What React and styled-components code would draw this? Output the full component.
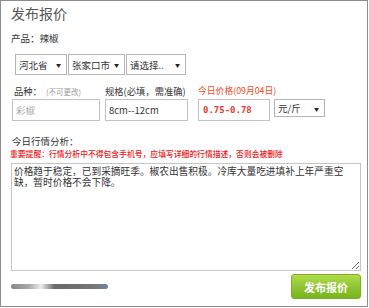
import React from "react";
import styled, { createGlobalStyle } from "styled-components";

const Global = createGlobalStyle`
  body {
    margin: 0;
    background: #fff;
    font-family: "Noto Sans CJK SC", "Liberation Sans", sans-serif;
  }
`;

const Frame = styled.div`
  width: 368px;
  height: 307px;
  box-sizing: border-box;
  border: 1px solid #8c8c8c;
  padding: 0 6px 0 9px;
  display: flex;
  flex-direction: column;
  color: #333;
`;

const Title = styled.h1`
  margin: 0;
  height: 24px;
  line-height: 24px;
  font-size: 14px;
  font-weight: normal;
  color: #555;
  padding-left: 1px;
`;

const Product = styled.div`
  margin-top: 6px;
  line-height: 14px;
  font-size: 9.5px;
  padding-left: 1px;
`;

const SelectRow = styled.div`
  margin-top: 9px;
  padding-left: 5px;
  display: flex;
  gap: 1px;
`;

const Select = styled.div`
  box-sizing: border-box;
  width: ${(p) => p.w}px;
  height: ${(p) => p.h || 21}px;
  border: 1px solid #b4b4b4;
  background: #fff;
  display: flex;
  align-items: center;
  padding: 0 5px 0 3px;
  font-size: 9.5px;
  color: #333;
  overflow: hidden;
`;

const SelectText = styled.span`
  flex: 1;
  white-space: nowrap;
  overflow: hidden;
`;

const Arrow = styled.span`
  font-size: 5px;
  color: #222;
  margin-left: 2px;
`;

const FieldRow = styled.div`
  margin-top: 9px;
  margin-left: 2px;
  display: flex;
`;

const Field = styled.div`
  width: ${(p) => p.w}px;
  margin-right: ${(p) => p.gap || 0}px;
  display: flex;
  flex-direction: column;
`;

const Label = styled.div`
  height: 14px;
  line-height: 14px;
  font-size: ${(p) => (p.red ? 8.8 : 9.3)}px;
  white-space: nowrap;
  padding-left: ${(p) => p.pad || 0}px;
  color: ${(p) => (p.red ? "#ea4a2a" : "#333")};
  margin-bottom: 1px;
`;

const Hint = styled.span`
  font-size: 7.5px;
  color: #999;
  margin-left: 4px;
`;

const Input = styled.div`
  box-sizing: border-box;
  height: 22px;
  border: 1px solid #c2c2c2;
  display: flex;
  align-items: center;
  padding-left: 3px;
  font-size: 9.5px;
  color: ${(p) => (p.muted ? "#aaa" : "#333")};
`;

const Price = styled(Input)`
  padding-left: 4px;
  font-family: "DejaVu Sans Mono", "Liberation Mono", monospace;
  font-weight: bold;
  font-size: 9px;
  color: #e43a30;
`;

const Analysis = styled.div`
  margin-top: 14px;
  margin-left: 2px;
  line-height: 13px;
  font-size: 9.5px;
`;

const Warning = styled.div`
  line-height: 12px;
  font-size: 7.8px;
  font-weight: 500;
  white-space: nowrap;
  color: #e8211b;
`;

const Area = styled.textarea`
  margin: 3px 0 0 1px;
  width: 350px;
  height: 108px;
  box-sizing: border-box;
  border: 1px solid #c6c6c6;
  padding: 2px 14px 2px 2px;
  font-family: "Noto Sans CJK SC", sans-serif;
  font-size: 9.7px;
  line-height: 11px;
  color: #333;
  outline: none;
`;

const Bottom = styled.div`
  margin-top: 3px;
  display: flex;
  align-items: center;
  justify-content: space-between;
`;

const Smudge = styled.div`
  width: 97px;
  height: 5px;
  margin-left: 1px;
  border-radius: 3px;
  background: linear-gradient(
    to right,
    #888,
    #a8a8a8 18%,
    #ececec 31%,
    #6a6a6a 45%,
    #757575 85%,
    #6a88a6 100%
  );
  filter: blur(0.7px);
`;

const Button = styled.button`
  width: 70px;
  height: 25px;
  border: 1px solid #7cb024;
  border-radius: 3px;
  background: linear-gradient(#b2dc4c, #8cc431 55%, #79b41e);
  color: #fff;
  font-family: "Noto Sans CJK SC", sans-serif;
  font-size: 11px;
  font-weight: bold;
  padding: 0;
`;

export default function App() {
  return (
    <>
      <Global />
      <Frame>
        <Title>发布报价</Title>
        <Product>产品：辣椒</Product>
        <SelectRow>
          <Select w={52}>
            <SelectText>河北省</SelectText>
            <Arrow>▼</Arrow>
          </Select>
          <Select w={57}>
            <SelectText>张家口市</SelectText>
            <Arrow>▼</Arrow>
          </Select>
          <Select w={60}>
            <SelectText>请选择..</SelectText>
            <Arrow>▼</Arrow>
          </Select>
        </SelectRow>
        <FieldRow>
          <Field w={88} gap={5}>
            <Label pad={2}>
              品种：<Hint>(不可更改)</Hint>
            </Label>
            <Input muted>彩椒</Input>
          </Field>
          <Field w={83} gap={10}>
            <Label>规格(必填，需准确)</Label>
            <Input>8cm--12cm</Input>
          </Field>
          <Field w={72} gap={4}>
            <Label red>今日价格(09月04日)</Label>
            <Price>0.75-0.78</Price>
          </Field>
          <Field w={51}>
            <Label />
            <Select w={51} h={18}>
              <SelectText>元/斤</SelectText>
              <Arrow>▼</Arrow>
            </Select>
          </Field>
        </FieldRow>
        <Analysis>今日行情分析：</Analysis>
        <Warning>
          重要提醒：行情分析中不得包含手机号，应填写详细的行情描述，否则会被删除
        </Warning>
        <Area defaultValue="价格趋于稳定，已到采摘旺季。椒农出售积极。冷库大量吃进填补上年严重空缺，暂时价格不会下降。" />
        <Bottom>
          <Smudge />
          <Button>发布报价</Button>
        </Bottom>
      </Frame>
    </>
  );
}
